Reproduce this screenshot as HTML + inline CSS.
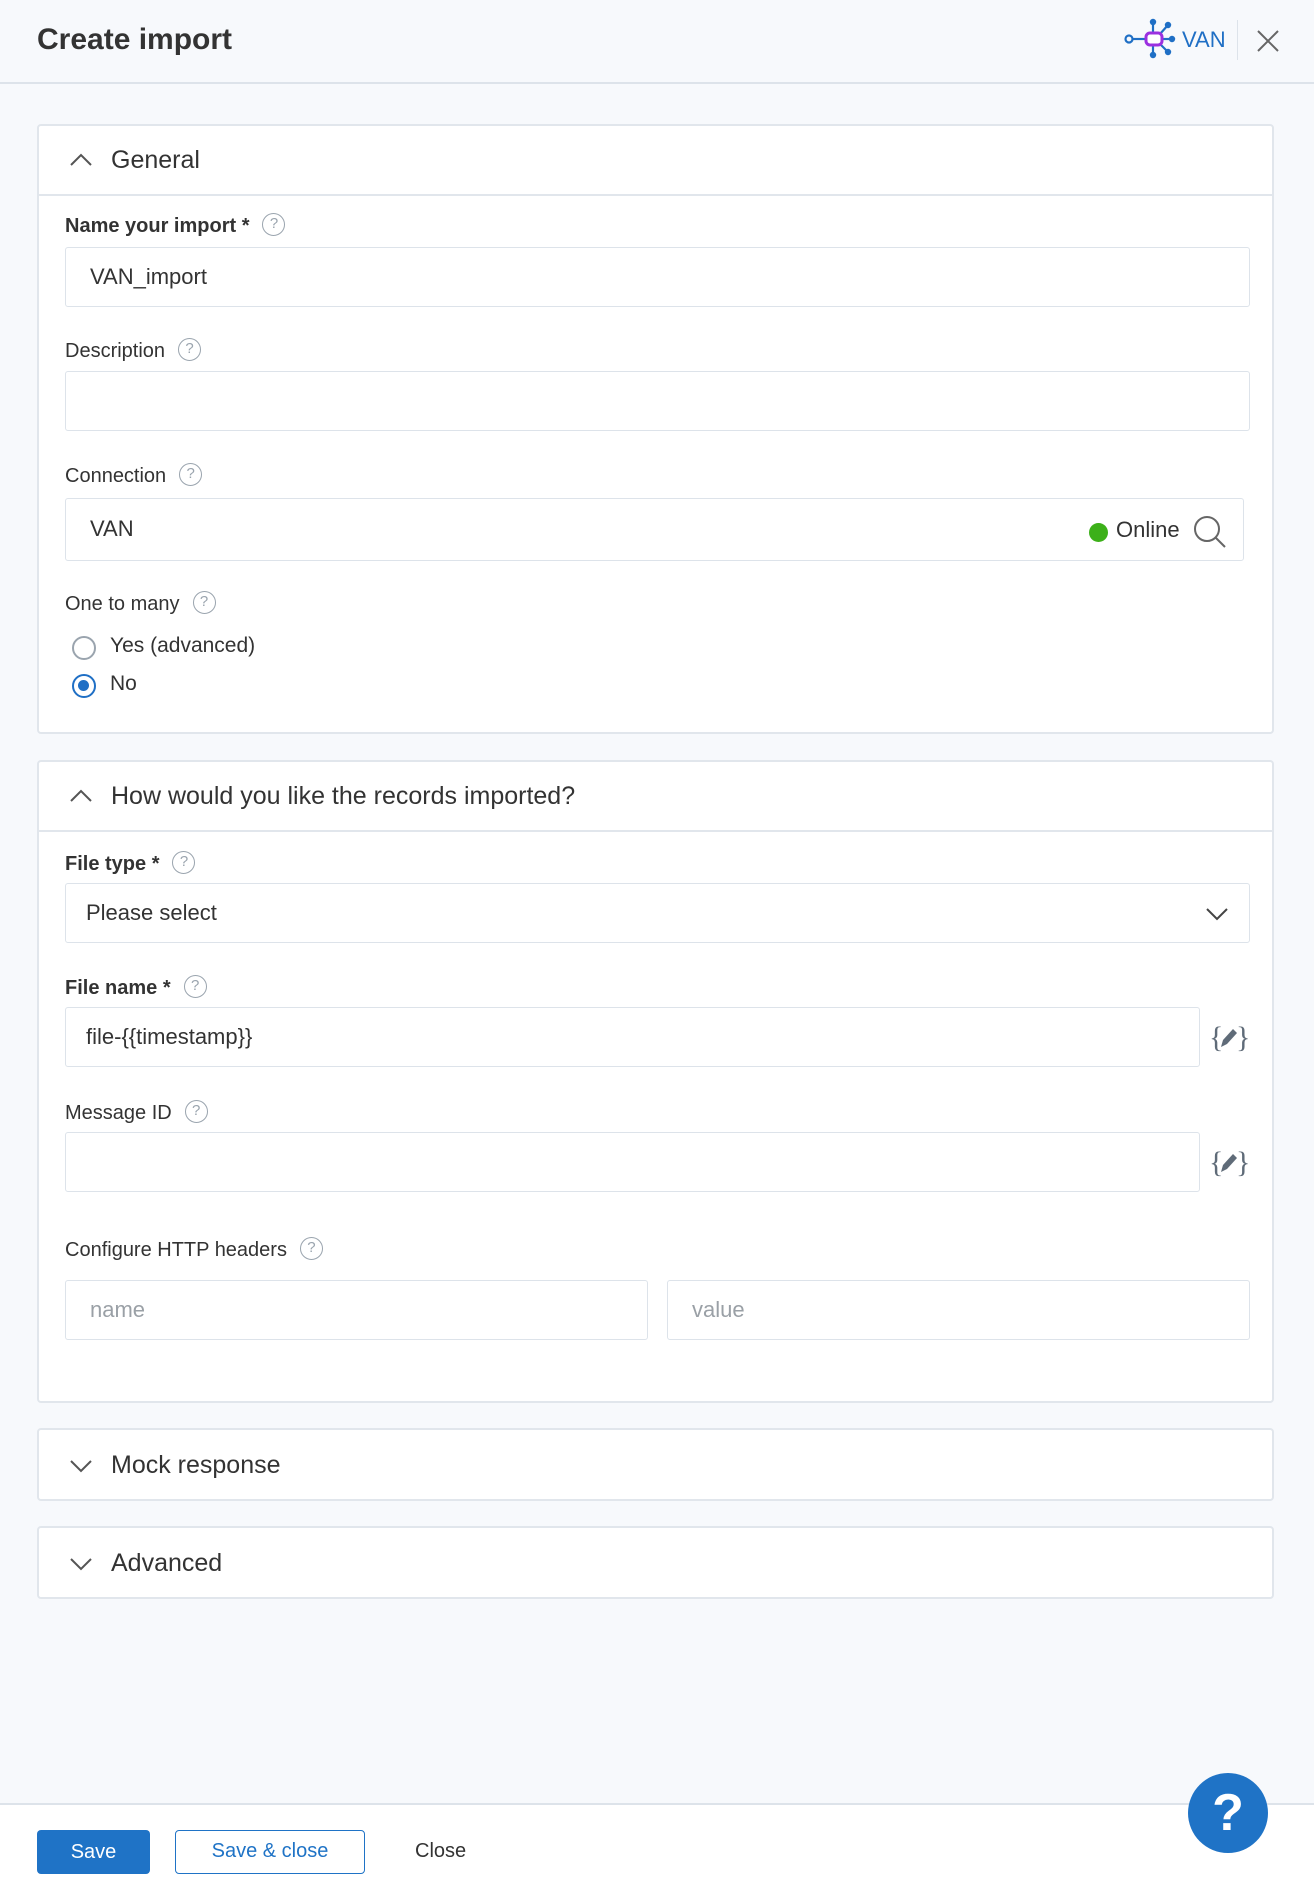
<!DOCTYPE html>
<html><head><meta charset="utf-8"><style>
*{box-sizing:border-box;margin:0;padding:0}
body{width:1314px;height:1898px;background:#f7f9fc;font-family:"Liberation Sans",sans-serif;color:#333;position:relative;overflow:hidden}
.a{position:absolute}
.hdr{left:0;top:0;width:1314px;height:84px;border-bottom:2px solid #dde3ea;background:#f7f9fc}
.card{background:#fff;border:2px solid #e1e6ec;border-radius:4px;left:37px;width:1237px}
.ch{left:0;top:0;width:100%;border-bottom:2px solid #e1e6ec}
.ct{font-size:25px;color:#333;left:72px}
.chev{left:30px}
.lbl{font-size:20px;color:#333;left:26px}
.lbl b{font-weight:bold}
.q{display:inline-block;width:23px;height:23px;border:1.5px solid #9aa4ae;border-radius:50%;color:#9aa4ae;font-size:15px;text-align:center;line-height:20px;vertical-align:middle;margin-left:13px;position:relative;top:-2px}
.inp{background:#fff;border:1.5px solid #dde3ea;border-radius:3px;left:26px;height:60px;font-size:22px;color:#333;padding-left:24px;line-height:57px}
.ph{color:#9aa0a6}
</style></head><body>
<div class="a hdr">
 <div class="a" style="left:37px;top:23px;font-size:30px;font-weight:bold;color:#333">Create import</div>
 <svg class="a" style="left:1118px;top:16px" width="62" height="46" viewBox="1118 16 62 46">
  <g stroke="#1f6fc5" stroke-width="2.2" fill="none">
   <circle cx="1129" cy="39" r="3.5"/><line x1="1132" y1="39" x2="1146" y2="39"/>
   <line x1="1153" y1="22" x2="1153" y2="34"/><line x1="1153" y1="44" x2="1153" y2="55"/>
   <line x1="1162" y1="39" x2="1172" y2="39"/><line x1="1160" y1="34" x2="1168" y2="25"/><line x1="1160" y1="44" x2="1168" y2="52"/>
  </g>
  <g fill="#1f6fc5"><circle cx="1153" cy="22" r="3.2"/><circle cx="1153" cy="55" r="3.2"/><circle cx="1172" cy="39" r="3.2"/><circle cx="1168" cy="25" r="3.2"/><circle cx="1168" cy="52" r="3.2"/></g>
  <rect x="1146" y="33" width="16" height="12" rx="4" fill="#fff" stroke="#9b30e0" stroke-width="3"/>
 </svg>
 <div class="a" style="left:1182px;top:27px;font-size:22px;color:#1f6fc5">VAN</div>
 <div class="a" style="left:1237px;top:20px;width:1px;height:40px;background:#dde3ea"></div>
 <svg class="a" style="left:1257px;top:30px" width="22" height="22"><path d="M1 1L21 21M21 1L1 21" stroke="#666" stroke-width="2"/></svg>
</div>

<div class="a card" style="top:124px;height:610px">
 <div class="a ch" style="height:70px"></div>
 <svg class="a chev" style="top:26px" width="24" height="16"><path d="M2 13L12 3L22 13" stroke="#555" stroke-width="2" fill="none"/></svg>
 <div class="a ct" style="top:20px">General</div>
 <div class="a lbl" style="top:89px"><b>Name your import *</b><span class="q">?</span></div>
 <div class="a inp" style="top:121px;width:1185px">VAN_import</div>
 <div class="a lbl" style="top:214px">Description<span class="q">?</span></div>
 <div class="a inp" style="top:245px;width:1185px"></div>
 <div class="a lbl" style="top:339px">Connection<span class="q">?</span></div>
 <div class="a inp" style="top:372px;width:1179px;height:63px;line-height:60px">VAN</div>
 <div class="a" style="left:1050px;top:397px;width:19px;height:19px;border-radius:50%;background:#3cb019"></div>
 <div class="a" style="left:1077px;top:391px;font-size:22px;color:#333">Online</div>
 <svg class="a" style="left:1154px;top:389px" width="34" height="34"><circle cx="14" cy="14" r="12" stroke="#666" stroke-width="2" fill="none"/><path d="M23 23L32 32" stroke="#666" stroke-width="2"/></svg>
 <div class="a lbl" style="top:467px">One to many<span class="q">?</span></div>
 <div class="a" style="left:33px;top:510px;width:24px;height:24px;border:2px solid #9aa4ae;border-radius:50%"></div>
 <div class="a" style="left:71px;top:508px;font-size:21px">Yes (advanced)</div>
 <div class="a" style="left:33px;top:548px;width:24px;height:24px;border:2.5px solid #1f6fc5;border-radius:50%"><div style="margin:4px;width:11px;height:11px;border-radius:50%;background:#1f6fc5"></div></div>
 <div class="a" style="left:71px;top:546px;font-size:21px">No</div>
</div>

<div class="a card" style="top:760px;height:643px">
 <div class="a ch" style="height:70px"></div>
 <svg class="a chev" style="top:26px" width="24" height="16"><path d="M2 13L12 3L22 13" stroke="#555" stroke-width="2" fill="none"/></svg>
 <div class="a ct" style="top:20px">How would you like the records imported?</div>
 <div class="a lbl" style="top:91px"><b>File type *</b><span class="q">?</span></div>
 <div class="a inp" style="top:121px;width:1185px;padding-left:20px">Please select</div>
 <svg class="a" style="left:1166px;top:144px" width="24" height="16"><path d="M2 3L12 13L22 3" stroke="#444" stroke-width="2" fill="none"/></svg>
 <div class="a lbl" style="top:215px"><b>File name *</b><span class="q">?</span></div>
 <div class="a inp" style="top:245px;width:1135px;padding-left:20px">file-{{timestamp}}</div>
 <svg class="a" style="left:1170px;top:258px" width="40" height="34" viewBox="0 0 40 34"><text x="0" y="27" font-family="Liberation Serif" font-size="30" fill="#5f6b78">{</text><text x="27" y="27" font-family="Liberation Serif" font-size="30" fill="#5f6b78">}</text><path d="M12 27L14 20L24 9L28 13L18 24Z" fill="#5f6b78"/></svg>
 <div class="a lbl" style="top:340px">Message ID<span class="q">?</span></div>
 <div class="a inp" style="top:370px;width:1135px"></div>
 <svg class="a" style="left:1170px;top:383px" width="40" height="34" viewBox="0 0 40 34"><text x="0" y="27" font-family="Liberation Serif" font-size="30" fill="#5f6b78">{</text><text x="27" y="27" font-family="Liberation Serif" font-size="30" fill="#5f6b78">}</text><path d="M12 27L14 20L24 9L28 13L18 24Z" fill="#5f6b78"/></svg>
 <div class="a lbl" style="top:477px">Configure HTTP headers<span class="q">?</span></div>
 <div class="a inp ph" style="top:518px;width:583px">name</div>
 <div class="a inp ph" style="top:518px;left:628px;width:583px">value</div>
</div>

<div class="a card" style="top:1428px;height:73px">
 <svg class="a chev" style="top:28px" width="24" height="16"><path d="M2 3L12 13L22 3" stroke="#555" stroke-width="2" fill="none"/></svg>
 <div class="a ct" style="top:21px">Mock response</div>
</div>
<div class="a card" style="top:1526px;height:73px">
 <svg class="a chev" style="top:28px" width="24" height="16"><path d="M2 3L12 13L22 3" stroke="#555" stroke-width="2" fill="none"/></svg>
 <div class="a ct" style="top:21px">Advanced</div>
</div>

<div class="a" style="left:0;top:1803px;width:1314px;height:95px;background:#fff;border-top:2px solid #dde3ea"></div>
<div class="a" style="left:37px;top:1830px;width:113px;height:44px;background:#1f73c6;border-radius:4px;color:#fff;font-size:20px;text-align:center;line-height:44px">Save</div>
<div class="a" style="left:175px;top:1830px;width:190px;height:44px;border:1.5px solid #1f73c6;border-radius:4px;color:#1f73c6;font-size:20px;text-align:center;line-height:41px">Save &amp; close</div>
<div class="a" style="left:415px;top:1840px;font-size:20px;color:#333">Close</div>
<div class="a" style="left:1188px;top:1773px;width:80px;height:80px;border-radius:50%;background:#1f73c6;color:#fff;font-size:52px;font-weight:bold;text-align:center;line-height:80px">?</div>
</body></html>
